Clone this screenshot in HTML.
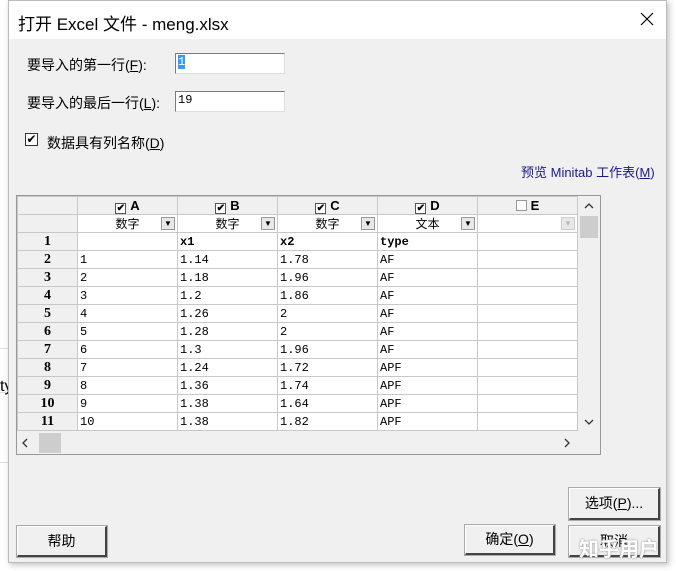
<!DOCTYPE html>
<html><head><meta charset="utf-8"><style>
*{box-sizing:border-box;margin:0;padding:0}
body{width:676px;height:571px;background:#fff;position:relative;overflow:hidden;font-family:"Liberation Sans","Noto Sans CJK SC",sans-serif;font-size:13px;color:#000}
.abs{position:absolute}
.dlg{left:8px;top:0;width:659px;height:563px;background:#f0f0f0;border:1px solid #bbb;box-shadow:2px 2px 6px rgba(0,0,0,.25)}
.tb{left:0;top:0;width:657px;height:38px;background:#fff}
.inp{background:#fff;border:1px solid #7a7a7a;border-right-color:#ddd;border-bottom-color:#ddd;font-size:12px;padding:1px 2px;font-family:"Liberation Mono",monospace}
.btn{background:#f0f0f0;border:1px solid #fff;border-right:2px solid #444;border-bottom:2px solid #444;outline:1px solid #aaa;text-align:center;font-size:14px}
table{border-collapse:collapse;table-layout:fixed;font-family:"Liberation Mono","Noto Serif CJK SC",monospace;font-size:12px}
td{border:1px solid #c8c8c8;height:18px;padding:0 2px;white-space:nowrap;overflow:hidden;background:#fff}
td.h{background:#f0f0f0;text-align:center;font-weight:bold;font-size:14px;font-family:"Liberation Serif",serif}
td.c{font-family:"Liberation Sans",sans-serif;font-size:13px}
td.t{background:#fff;text-align:center;font-family:"Liberation Sans","Noto Sans CJK SC",sans-serif;font-size:12px;position:relative}
td.t i{position:absolute;right:2px;top:2px;width:14px;height:13px;background:#e8e8e8;border:1px solid #999;font-style:normal;font-size:8px;line-height:12px}
.cb{display:inline-block;width:11px;height:11px;border:1px solid #555;font-size:10px;line-height:9px;vertical-align:-1px;background:#fff;font-weight:bold;margin-right:4px}
.grid{position:absolute;background:#ddd}
</style></head><body>
<div class="grid" style="left:0;top:348px;width:8px;height:1px"></div>
<div class="grid" style="left:0;top:392px;width:8px;height:1px"></div>
<div class="grid" style="left:0;top:462px;width:8px;height:1px"></div>
<div class="abs" style="left:0;top:378px;font-size:16px">ty</div>
<div class="abs dlg">
 <div class="abs tb"></div>
 <div class="abs" style="left:9px;top:9px;font-size:17px">打开 Excel 文件 - meng.xlsx</div>
 <svg class="abs" style="left:631px;top:11px" width="14" height="14"><path d="M1 1L13 13M13 1L1 13" stroke="#000" stroke-width="1.2"/></svg>
 <div class="abs" style="left:18px;top:54px;font-size:14px">要导入的第一行(<u>F</u>):</div>
 <div class="abs inp" style="left:166px;top:52px;width:110px;height:21px"><span style="background:#39f;color:#fff">1</span></div>
 <div class="abs" style="left:18px;top:92px;font-size:14px">要导入的最后一行(<u>L</u>):</div>
 <div class="abs inp" style="left:166px;top:90px;width:110px;height:21px">19</div>
 <div class="abs" style="left:16px;top:132px;width:13px;height:13px;border:1px solid #333;background:#fff;font-size:12px;line-height:11px;text-align:center">✔</div>
 <div class="abs" style="left:38px;top:132px;font-size:14px">数据具有列名称(<u>D</u>)</div>
 <div class="abs" style="left:512px;top:161px;font-size:13px;color:#1a1a8c">预览 Minitab 工作表(<u>M</u>)</div>
 <div class="abs" style="left:7px;top:194px;width:585px;height:260px;border:1px solid #999;background:#f0f0f0">
  <table style="width:560px">
   <colgroup><col style="width:60px"><col style="width:100px"><col style="width:100px"><col style="width:100px"><col style="width:100px"><col style="width:100px"></colgroup>
   <tr><td class="h"></td><td class="h c"><span class="cb">✔</span>A</td><td class="h c"><span class="cb">✔</span>B</td><td class="h c"><span class="cb">✔</span>C</td><td class="h c"><span class="cb">✔</span>D</td><td class="h c"><span class="cb" style="border-color:#999"></span>E</td></tr>
   <tr><td class="h"></td><td class="t">数字<i>▼</i></td><td class="t">数字<i>▼</i></td><td class="t">数字<i>▼</i></td><td class="t">文本<i>▼</i></td><td class="t"><i style="color:#bbb;border-color:#ccc">▼</i></td></tr>
   <tr><td class="h">1</td><td></td><td><b>x1</b></td><td><b>x2</b></td><td><b>type</b></td><td></td></tr>
   <tr><td class="h">2</td><td>1</td><td>1.14</td><td>1.78</td><td>AF</td><td></td></tr>
   <tr><td class="h">3</td><td>2</td><td>1.18</td><td>1.96</td><td>AF</td><td></td></tr>
   <tr><td class="h">4</td><td>3</td><td>1.2</td><td>1.86</td><td>AF</td><td></td></tr>
   <tr><td class="h">5</td><td>4</td><td>1.26</td><td>2</td><td>AF</td><td></td></tr>
   <tr><td class="h">6</td><td>5</td><td>1.28</td><td>2</td><td>AF</td><td></td></tr>
   <tr><td class="h">7</td><td>6</td><td>1.3</td><td>1.96</td><td>AF</td><td></td></tr>
   <tr><td class="h">8</td><td>7</td><td>1.24</td><td>1.72</td><td>APF</td><td></td></tr>
   <tr><td class="h">9</td><td>8</td><td>1.36</td><td>1.74</td><td>APF</td><td></td></tr>
   <tr><td class="h">10</td><td>9</td><td>1.38</td><td>1.64</td><td>APF</td><td></td></tr>
   <tr><td class="h">11</td><td>10</td><td>1.38</td><td>1.82</td><td>APF</td><td></td></tr>
  </table>
  <div class="abs" style="left:561px;top:0;width:22px;height:236px;background:#f0f0f0"></div>
  <svg class="abs" style="left:567px;top:7px" width="10" height="6"><path d="M1 5L5 1L9 5" fill="none" stroke="#333" stroke-width="1.3"/></svg>
  <div class="abs" style="left:563px;top:20px;width:18px;height:22px;background:#cdcdcd"></div>
  <svg class="abs" style="left:567px;top:223px" width="10" height="6"><path d="M1 1L5 5L9 1" fill="none" stroke="#333" stroke-width="1.3"/></svg>
  <svg class="abs" style="left:5px;top:242px" width="6" height="10"><path d="M5 1L1 5L5 9" fill="none" stroke="#333" stroke-width="1.3"/></svg>
  <div class="abs" style="left:22px;top:237px;width:22px;height:20px;background:#cdcdcd"></div>
  <svg class="abs" style="left:547px;top:242px" width="6" height="10"><path d="M1 1L5 5L1 9" fill="none" stroke="#333" stroke-width="1.3"/></svg>
 </div>
 <div class="abs btn" style="left:560px;top:487px;width:91px;height:32px;line-height:29px">选项(<u>P</u>)...</div>
 <div class="abs btn" style="left:8px;top:525px;width:90px;height:31px;line-height:28px">帮助</div>
 <div class="abs btn" style="left:456px;top:524px;width:90px;height:30px;line-height:27px">确定(<u>O</u>)</div>
 <div class="abs btn" style="left:560px;top:525px;width:91px;height:31px;line-height:28px">取消</div>
 <div class="abs" style="left:570px;top:532px;font-size:20px;color:#fff;font-weight:bold;text-shadow:0 0 2px #888">知乎用户</div>
</div>
</body></html>
